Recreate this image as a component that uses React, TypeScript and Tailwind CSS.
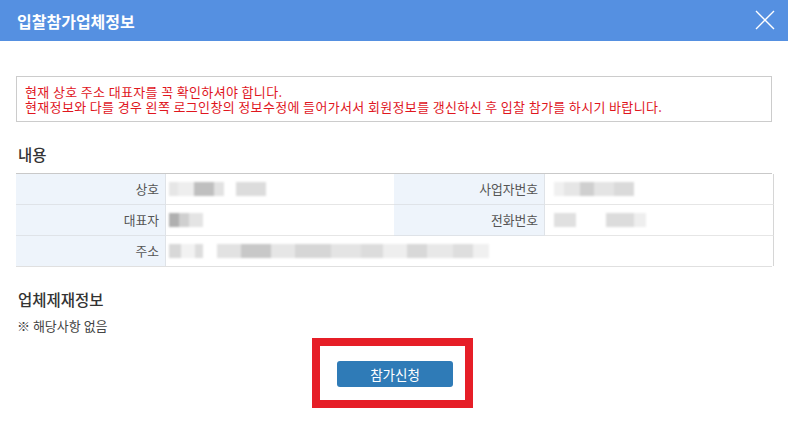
import React from "react";

type Seg = [number, string];

function Blur({ segs, h = 14 }: { segs: Seg[]; h?: number }) {
  return (
    <div className="flex items-center blur-[1.2px]">
      {segs.map(([w, c], i) => (
        <div key={i} style={{ width: w, height: h, backgroundColor: c }} />
      ))}
    </div>
  );
}

const Label = ({ children, last }: { children: React.ReactNode; last?: boolean }) => (
  <div
    className={
      "flex items-center justify-end pr-[6px] bg-[#eef4fb] border-r border-[#dfe3e8] text-[12.8px] text-[#555] " +
      (last ? "" : "border-b border-b-[#dfe3e8]")
    }
  >
    {children}
  </div>
);

const Val = ({ children, last, right }: { children: React.ReactNode; last?: boolean; right?: boolean }) => (
  <div
    className={
      "flex items-center pl-[3px] " +
      (last ? "" : "border-b border-b-[#e6e6e6] ") +
      (right ? "border-r border-[#d6d6d6]" : "")
    }
  >
    {children}
  </div>
);

export default function App() {
  return (
    <div
      className="w-[788px] h-[421px] bg-white overflow-hidden"
      style={{ fontFamily: '"Noto Sans CJK KR", "Noto Sans", sans-serif' }}
    >
      <div className="h-[41px] bg-[#5590e1] flex items-center justify-between pl-[17px] pr-[12px]">
        <div className="text-white text-[16px] font-bold leading-[20px]">입찰참가업체정보</div>
        <svg width="22" height="22" viewBox="0 0 22 22" className="mt-[-2px]">
          <path d="M2 2 L20 20 M20 2 L2 20" stroke="#ffffff" strokeWidth="1.4" fill="none" />
        </svg>
      </div>

      <div className="px-[16px]">
        <div className="mt-[35px] border border-[#cccccc] px-[8px] py-[7px] text-[13px] tracking-[0.35px] leading-[15px] text-[#e0161e]">
          <div>현재 상호 주소 대표자를 꼭 확인하셔야 합니다.</div>
          <div>현재정보와 다를 경우 왼쪽 로그인창의 정보수정에 들어가서서 회원정보를 갱신하신 후 입찰 참가를 하시기 바랍니다.</div>
        </div>

        <div className="mt-[22px] mb-[9px] pl-[2px] text-[15.5px] leading-[20px] font-medium text-[#333]">내용</div>

        <div className="grid grid-cols-[150px_228px_151px_229px] grid-rows-[31px_31px_30px] border-t border-[#c9c9c9] border-b border-b-[#e0e0e0]">
          <Label>상호</Label>
          <Val>
            <Blur segs={[[9, "#e6e6e6"], [16, "#eeeeee"], [20, "#bfbfbf"], [10, "#e2e2e2"], [12, "transparent"], [30, "#dcdcdc"]]} />
          </Val>
          <Label>사업자번호</Label>
          <Val right>
            <div className="pl-[6px]">
              <Blur segs={[[10, "#f0f0f0"], [16, "#e6e6e6"], [14, "#cfcfcf"], [20, "#e4e4e4"], [20, "#dadada"]]} />
            </div>
          </Val>

          <Label>대표자</Label>
          <Val>
            <Blur segs={[[10, "#b0b0b0"], [10, "#cfcfcf"], [14, "#e4e4e4"]]} />
          </Val>
          <Label>전화번호</Label>
          <Val right>
            <div className="pl-[6px]">
              <Blur segs={[[22, "#e0e0e0"], [30, "transparent"], [28, "#dcdcdc"], [12, "#eeeeee"]]} />
            </div>
          </Val>

          <Label last>주소</Label>
          <div className="col-span-3 flex items-center pl-[3px] border-r border-[#d6d6d6]">
            <Blur
              segs={[
                [12, "#d8d8d8"],
                [14, "#f2f2f2"],
                [8, "#dddddd"],
                [14, "transparent"],
                [24, "#e2e2e2"],
                [30, "#c8c8c8"],
                [24, "#e6e6e6"],
                [36, "#d6d6d6"],
                [30, "#e4e4e4"],
                [22, "#dcdcdc"],
                [24, "#eeeeee"],
                [20, "#d8d8d8"],
                [26, "#e8e8e8"],
                [20, "#dedede"],
                [16, "#f0f0f0"],
              ]}
            />
          </div>
        </div>

        <div className="mt-[22px] pl-[2px] text-[15.5px] leading-[20px] font-medium text-[#333]">업체제재정보</div>
        <div className="mt-[9px] pl-[1px] text-[13px] leading-[16px] text-[#444]">※ 해당사항 없음</div>

        <div className="mt-[4px] flex justify-center">
          <div className="ml-[-3px] border-[8px] border-[#e61e27] pl-[17px] pr-[12px] pt-[15px] pb-[13px]">
            <button className="w-[116px] h-[26px] rounded-[3px] bg-[#2f7bb7] text-white text-[13.5px] leading-[26px]">
              참가신청
            </button>
          </div>
        </div>
      </div>
    </div>
  );
}
